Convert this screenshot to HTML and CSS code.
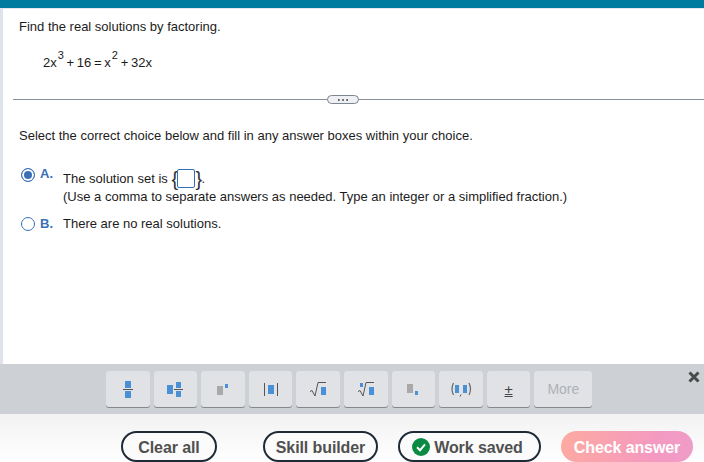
FILE: index.html
```html
<!DOCTYPE html>
<html lang="en">
<head>
<meta charset="utf-8">
<title>Factoring</title>
<link rel="stylesheet" href="styles.css">
</head>
<body>
<div class="topbar"></div>
<main class="content">
  <p class="prompt">Find the real solutions by factoring.</p>
  <p class="equation">2x<sup>3</sup> + 16 = x<sup>2</sup> + 32x</p>
  <div class="divider"><span class="more-pill">
    <svg width="12" height="2" viewBox="0 0 12 2"><rect x="0" width="2" height="2"/><rect x="5" width="2" height="2"/><rect x="10" width="2" height="2"/></svg>
  </span></div>
  <p class="instruction">Select the correct choice below and fill in any answer boxes within your choice.</p>
  <div class="choice choice-a">
    <span class="radio checked"></span><span class="letter">A.</span>
    <div class="choice-text">
      <div class="answer-line">The solution set is <span class="brace brace-open">{</span><span class="answer-box"></span><span class="brace">}</span>.</div>
      <div class="hint">(Use a comma to separate answers as needed. Type an integer or a simplified fraction.)</div>
    </div>
  </div>
  <div class="choice choice-b">
    <span class="radio"></span><span class="letter">B.</span>
    <div class="choice-text">There are no real solutions.</div>
  </div>
</main>
<div class="toolbar">
  <button class="tool"><svg width="24" height="24" viewBox="0 0 24 24"><rect x="9" y="0" width="6" height="7" class="b"/><rect x="7" y="8" width="10" height="1" class="k"/><rect x="9" y="10" width="6" height="7" class="b"/></svg></button>
  <button class="tool"><svg width="24" height="24" viewBox="0 0 24 24"><rect x="4" y="4" width="6" height="9" class="b"/><rect x="13" y="1" width="5" height="6" class="b"/><rect x="11" y="8" width="9" height="1" class="k"/><rect x="13" y="10" width="5" height="6" class="b"/></svg></button>
  <button class="tool"><svg width="24" height="24" viewBox="0 0 24 24"><rect x="6" y="5" width="6" height="9" class="g"/><rect x="14" y="3" width="3" height="4" class="b"/></svg></button>
  <button class="tool"><svg width="24" height="24" viewBox="0 0 24 24"><rect x="5" y="2" width="1" height="13" class="k"/><rect x="9" y="4" width="6" height="9" class="b"/><rect x="18" y="2" width="1" height="13" class="k"/></svg></button>
  <button class="tool"><svg width="24" height="24" viewBox="0 0 24 24"><path d="M4 10.500l2-1 3 5.500 3-13.500h8" class="s"/><rect x="15" y="6" width="5" height="8" class="b"/></svg></button>
  <button class="tool"><svg width="24" height="24" viewBox="0 0 24 24"><rect x="6" y="2" width="3" height="4" class="b"/><path d="M4 10.500l2-1 3 5.500 3-13.500h8" class="s"/><rect x="15" y="6" width="5" height="8" class="b"/></svg></button>
  <button class="tool"><svg width="24" height="24" viewBox="0 0 24 24"><rect x="6" y="3" width="6" height="9" class="g"/><rect x="14" y="10" width="3" height="4" class="b"/></svg></button>
  <button class="tool"><svg width="24" height="24" viewBox="0 0 24 24"><path d="M4.500 2q-3 6 0 12M20 2q3 6 0 12" class="p"/><rect x="6" y="4" width="4" height="8" class="b"/><rect x="14" y="4" width="4" height="8" class="b"/><path d="M12 13.500l-1 2" class="s"/></svg></button>
  <button class="tool tool-text">±</button>
  <button class="tool tool-more">More</button>
  <button class="close" aria-label="Close"><svg width="12" height="12" viewBox="0 0 12 12"><path d="M1.500 1.500l9 9M10.500 1.500l-9 9"/></svg></button>
</div>
<footer class="footer">
  <button class="pill pill-clear">Clear all</button>
  <button class="pill pill-skill">Skill builder</button>
  <button class="pill pill-saved"><svg width="18" height="18" viewBox="0 0 18 18"><circle cx="9" cy="9" r="9" fill="#0b8a43"/><path d="M5 9.300l3 3 5-6" fill="none" stroke="#fff" stroke-width="2"/></svg>Work saved</button>
  <button class="pill pill-check">Check answer</button>
</footer>
</body>
</html>
```
FILE: styles.css
```css
* { box-sizing: border-box; }
html, body { margin: 0; padding: 0; }
body {
  width: 704px;
  height: 462px;
  overflow: hidden;
  background: #fff;
  font-family: "Liberation Sans", Arial, sans-serif;
  font-size: 13px;
  color: #1c1c1c;
  display: flex;
  flex-direction: column;
}
.topbar { height: 8px; background: #007ba0; flex: none; }
.content {
  height: 356px;
  flex: none;
  border-left: 3px solid #dfe3ec;
  padding: 10px 0 0 16px;
  border-top: 1px solid #e4e7ee;
}
p { margin: 0; }
.prompt { line-height: 15px; }
.equation {
  margin: 21px 0 0 24px;
  line-height: 15px;
  word-spacing: -0.9px;
  white-space: pre;
}
sup {
  font-size: 11px;
  line-height: 0;
  vertical-align: baseline;
  position: relative;
  top: -8px;
  margin-left: 1px;
}
.divider {
  margin: 29px 0 0 -6px;
  background: #8a9098;
  position: relative;
  height: 1px;
}
.more-pill {
  position: absolute;
  left: 314px;
  top: -4px;
  width: 32px;
  height: 9px;
  border: 1px solid #7d858e;
  border-radius: 5px;
  background: #eef0f3;
  display: flex;
  align-items: center;
  justify-content: center;
}
.more-pill svg { fill: #444; display: block; width: 10px; height: 2px; }
.instruction { margin-top: 28px; line-height: 15px; }
.choice { display: flex; align-items: flex-start; }
.choice-a { margin-top: 24px; }
.choice-b { margin-top: 12px; }
.radio {
  width: 14px;
  height: 14px;
  border: 1.5px solid #3b6fb6;
  border-radius: 50%;
  flex: none;
  margin: 1px 0 0 2px;
  background: #fff;
}
.radio.checked { background: #3b6fb6; box-shadow: inset 0 0 0 2px #fff; }
.letter { font-weight: 700; color: #3b6fb6; width: 23px; margin-left: 5px; flex: none; line-height: 15px; }
.choice-a .letter { margin-top: -1px; }
.choice-a .choice-text { margin-top: 1px; }
.choice-text { line-height: 15px; }
.answer-line { display: flex; align-items: center; height: 19px; padding-top: 2px; white-space: pre; }
.brace { font-size: 20px; line-height: 14px; font-weight: 400; color: #333; width: 6px; text-align: center; }
.brace-open { margin-left: 0; }
.answer-box { width: 18px; height: 19px; border: 1px solid #2f6fc0; border-radius: 2px; background: #fff; }
.hint { margin-top: 2px; }
.toolbar {
  height: 50px;
  flex: none;
  background: #cdd0d5;
  display: flex;
  align-items: flex-start;
  gap: 4px;
  padding: 7px 0 0 106px;
  position: relative;
}
.tool {
  width: 43.6px;
  height: 36px;
  border: 0;
  padding: 0;
  border-radius: 3px;
  background: #e1e2e5;
  box-shadow: 0 1px 0 #85878a;
  display: flex;
  align-items: center;
  justify-content: center;
  font-family: inherit;
  font-size: 15px;
  color: #444;
}
.tool svg { display: block; margin-top: 8px; }
.tool-text { text-decoration: underline; text-underline-offset: 1px; }
.tool-more { width: 58px; color: #aeb1b5; font-size: 14px; }
.b { fill: #4a90d6; }
.g { fill: #a9a9a9; }
.k { fill: #555; }
.s { fill: none; stroke: #555; stroke-width: 1; }
.p { fill: none; stroke: #666; stroke-width: 1.2; }
.close {
  position: absolute;
  right: 4px;
  top: 7px;
  width: 12px;
  height: 12px;
  padding: 0;
  border: 0;
  background: none;
}
.close svg { display: block; stroke: #4a4a4a; stroke-width: 3; fill: none; }
.footer {
  height: 48px;
  flex: none;
  background: linear-gradient(#f2f2f2, #fff);
  display: flex;
  align-items: flex-start;
  padding-top: 17px;
}
.pill {
  height: 31px;
  border: 2px solid #1f2a37;
  border-radius: 16px;
  background: #fbfbfb;
  font-family: "Liberation Sans", Arial, sans-serif;
  font-weight: 700;
  font-size: 16px;
  letter-spacing: -0.1px;
  color: #505050;
  padding: 2px 0 0;
  flex: none;
  display: flex;
  align-items: center;
  justify-content: center;
}
.pill-clear { width: 96px; margin-left: 121px; }
.pill-skill { width: 115px; margin-left: 46px; }
.pill-saved { width: 143px; margin-left: 20px; gap: 4px; padding-right: 4px; }
.pill-saved svg { margin-top: -2px; }
.pill-check {
  width: 132px;
  margin-left: 20px;
  border: 0;
  color: #fff;
  background: linear-gradient(100deg, #fdaaa0, #f49ac1 70%, #ee9cc8);
}
```
